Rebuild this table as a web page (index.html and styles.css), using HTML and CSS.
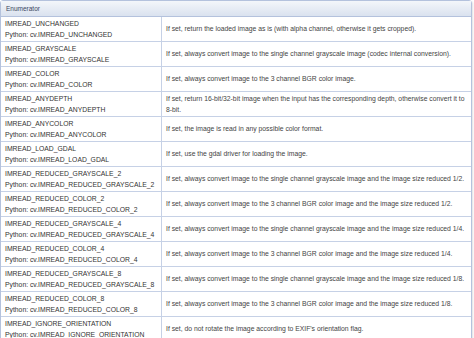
FILE: index.html
```html
<!DOCTYPE html>
<html lang="en">
<head>
  <meta charset="UTF-8">
  <title>ImreadModes</title>
  <link rel="stylesheet" href="styles.css">
</head>
<body>
  <table class="fieldtable">
    <tr>
      <th colspan="2">Enumerator</th>
    </tr>
    <tr>
      <td class="fieldname">IMREAD_UNCHANGED<br>Python: cv.IMREAD_UNCHANGED</td>
      <td class="fielddoc">If set, return the loaded image as is (with alpha channel, otherwise it gets cropped).</td>
    </tr>
    <tr>
      <td class="fieldname">IMREAD_GRAYSCALE<br>Python: cv.IMREAD_GRAYSCALE</td>
      <td class="fielddoc">If set, always convert image to the single channel grayscale image (codec internal conversion).</td>
    </tr>
    <tr>
      <td class="fieldname">IMREAD_COLOR<br>Python: cv.IMREAD_COLOR</td>
      <td class="fielddoc">If set, always convert image to the 3 channel BGR color image.</td>
    </tr>
    <tr>
      <td class="fieldname">IMREAD_ANYDEPTH<br>Python: cv.IMREAD_ANYDEPTH</td>
      <td class="fielddoc">If set, return 16-bit/32-bit image when the input has the corresponding depth, otherwise convert it to 8-bit.</td>
    </tr>
    <tr>
      <td class="fieldname">IMREAD_ANYCOLOR<br>Python: cv.IMREAD_ANYCOLOR</td>
      <td class="fielddoc">If set, the image is read in any possible color format.</td>
    </tr>
    <tr>
      <td class="fieldname">IMREAD_LOAD_GDAL<br>Python: cv.IMREAD_LOAD_GDAL</td>
      <td class="fielddoc">If set, use the gdal driver for loading the image.</td>
    </tr>
    <tr>
      <td class="fieldname">IMREAD_REDUCED_GRAYSCALE_2<br>Python: cv.IMREAD_REDUCED_GRAYSCALE_2</td>
      <td class="fielddoc">If set, always convert image to the single channel grayscale image and the image size reduced 1/2.</td>
    </tr>
    <tr>
      <td class="fieldname">IMREAD_REDUCED_COLOR_2<br>Python: cv.IMREAD_REDUCED_COLOR_2</td>
      <td class="fielddoc">If set, always convert image to the 3 channel BGR color image and the image size reduced 1/2.</td>
    </tr>
    <tr>
      <td class="fieldname">IMREAD_REDUCED_GRAYSCALE_4<br>Python: cv.IMREAD_REDUCED_GRAYSCALE_4</td>
      <td class="fielddoc">If set, always convert image to the single channel grayscale image and the image size reduced 1/4.</td>
    </tr>
    <tr>
      <td class="fieldname">IMREAD_REDUCED_COLOR_4<br>Python: cv.IMREAD_REDUCED_COLOR_4</td>
      <td class="fielddoc">If set, always convert image to the 3 channel BGR color image and the image size reduced 1/4.</td>
    </tr>
    <tr>
      <td class="fieldname">IMREAD_REDUCED_GRAYSCALE_8<br>Python: cv.IMREAD_REDUCED_GRAYSCALE_8</td>
      <td class="fielddoc">If set, always convert image to the single channel grayscale image and the image size reduced 1/8.</td>
    </tr>
    <tr>
      <td class="fieldname">IMREAD_REDUCED_COLOR_8<br>Python: cv.IMREAD_REDUCED_COLOR_8</td>
      <td class="fielddoc">If set, always convert image to the 3 channel BGR color image and the image size reduced 1/8.</td>
    </tr>
    <tr>
      <td class="fieldname">IMREAD_IGNORE_ORIENTATION<br>Python: cv.IMREAD_IGNORE_ORIENTATION</td>
      <td class="fielddoc">If set, do not rotate the image according to EXIF's orientation flag.</td>
    </tr>
  </table>
</body>
</html>
```

FILE: styles.css
```css
body {
  margin: 0;
  background-color: #fff;
  font-family: "Liberation Sans", Arial, sans-serif;
}

.fieldtable {
  width: 472px;
  border: 1px solid #b4c2dd;
  border-spacing: 0;
  border-radius: 3px;
  box-shadow: 1px 1px 2px rgba(0, 0, 0, 0.12);
  font-size: 6.8px;
  line-height: 10.5px;
}

.fieldtable th {
  padding: 0 5px;
  height: 15px;
  line-height: 15px;
  font-size: 6.5px;
  font-weight: 400;
  text-align: left;
  color: #3a4660;
  background: linear-gradient(#f3f6fa, #dae2ef);
  border-bottom: 1px solid #b4c2dd;
}

.fieldtable td {
  padding: 2px 4px 1px;
  border-bottom: 1px solid #c6d1e6;
}

.fieldtable tr:last-child td {
  border-bottom: none;
}

.fieldname {
  width: 152px;
  white-space: nowrap;
  vertical-align: top;
  color: #333;
  border-right: 1px solid #c6d1e6;
}

.fielddoc {
  vertical-align: middle;
  color: #444;
  padding-left: 3px;
}
```
